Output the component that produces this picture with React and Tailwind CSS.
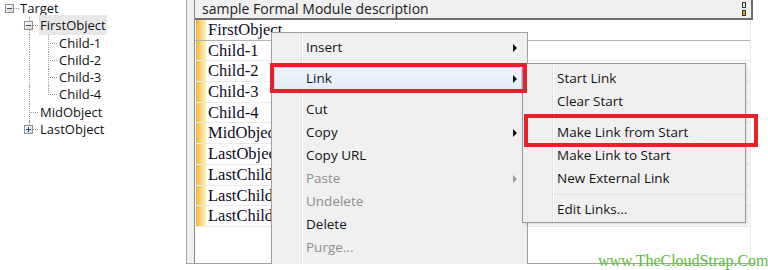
import React from "react";

const sans = { fontFamily: '"Open Sans", "Noto Sans", sans-serif' };

function TBox({ plus, left }) {
  return (
    <span
      className={`absolute top-[4px] w-[9px] h-[9px] border border-[#8f8f8f] bg-gradient-to-br from-white to-[#d8d8d8] ${left}`}
    >
      <span className="absolute left-[1px] top-[3px] w-[5px] h-px bg-[#2a4a78]" />
      {plus && <span className="absolute left-[3px] top-[1px] w-px h-[5px] bg-[#2a4a78]" />}
    </span>
  );
}

function HDot({ cls }) {
  return <span className={`absolute top-[8px] h-0 border-t border-dotted border-[#9a9a9a] ${cls}`} />;
}
function VDot({ cls }) {
  return <span className={`absolute w-0 border-l border-dotted border-[#9a9a9a] ${cls}`} />;
}

function TreeRow({ children, pad, text, hl }) {
  return (
    <div className={`relative h-[17.25px] leading-[17.25px] text-[13px] text-[#111] ${pad}`}>
      {children}
      <span className={`relative px-[1px] ${hl ? "bg-[#e8e8e8] py-[1px]" : ""}`}>{text}</span>
    </div>
  );
}

function Tree() {
  return (
    <div className="w-[186px] shrink-0" style={sans}>
      <TreeRow pad="pl-[19px]" text="Target">
        <TBox left="left-[5px]" />
        <HDot cls="left-[14px] w-[5px]" />
      </TreeRow>
      <TreeRow pad="pl-[39px]" text="FirstObject" hl>
        <VDot cls="left-[29px] top-0 h-[4px]" />
        <TBox left="left-[24px]" />
        <VDot cls="left-[29px] top-[13px] h-[5px]" />
        <HDot cls="left-[33px] w-[5px]" />
      </TreeRow>
      {["Child-1", "Child-2", "Child-3", "Child-4"].map((c, i) => (
        <TreeRow key={c} pad="pl-[58px]" text={c}>
          <VDot cls="left-[29px] top-0 h-full" />
          <VDot cls={`left-[48px] top-0 ${i === 3 ? "h-[9px]" : "h-full"}`} />
          <HDot cls="left-[48px] w-[9px]" />
        </TreeRow>
      ))}
      <TreeRow pad="pl-[39px]" text="MidObject">
        <VDot cls="left-[29px] top-0 h-full" />
        <HDot cls="left-[29px] w-[9px]" />
      </TreeRow>
      <TreeRow pad="pl-[39px]" text="LastObject">
        <VDot cls="left-[29px] top-0 h-[4px]" />
        <TBox left="left-[24px]" plus />
        <HDot cls="left-[33px] w-[5px]" />
      </TreeRow>
    </div>
  );
}

const rows = [
  "FirstObject",
  "Child-1",
  "Child-2",
  "Child-3",
  "Child-4",
  "MidObject",
  "LastObject",
  "LastChild",
  "LastChild",
  "LastChild",
];

function Main() {
  return (
    <div className="w-[568px] h-[264px] shrink-0 flex border-l border-b border-[#a3a3a3]">
      <div className="w-[7px] bg-[#f0f0f0]" />
      <div className="flex-1 flex flex-col border-l border-[#8c8c8c] mr-[1px]">
        <div
          className="flex items-center justify-between h-[20px] bg-[#f0f0f0] border-b-2 border-r-2 border-[#6e6e6e] pl-[7px] pr-[5px] text-[14px] text-[#1a1a1a]"
          style={sans}
        >
          <span className="leading-[18px]">sample Formal Module description</span>
          <span className="flex flex-col gap-[2px]">
            <span className="w-[4px] h-[6px] border border-[#333] bg-white" />
            <span className="w-[4px] h-[6px] border border-[#333] bg-[#f0a000]" />
          </span>
        </div>
        <div className="flex-1 bg-white border-r border-[#ececec] mr-[2px]">
          {rows.map((r, i) => (
            <div
              key={i}
              className={`flex h-[20.7px] border-b ${i === 0 ? "border-[#b4b4b4]" : "border-[#ececec]"}`}
            >
              <div className="w-[10px] ml-[1px] bg-gradient-to-r from-[#eeb035] via-[#fbd878] to-[#fff0b8]" />
              <div
                className="pl-[2px] text-[16.5px] leading-[20px] text-[#0b0b1e]"
                style={{ fontFamily: '"Liberation Serif", serif' }}
              >
                {r}
              </div>
            </div>
          ))}
        </div>
      </div>
    </div>
  );
}

function Arrow({ dim }) {
  return (
    <span
      className={`relative w-0 h-0 mr-[10px] border-y-[4px] border-y-transparent border-l-[4px] ${
        dim ? "border-l-[#9a9a9a]" : "border-l-[#111]"
      }`}
    />
  );
}

function Item({ text, arrow, dim, bold, hl }) {
  return (
    <div
      className={`relative h-[23px] flex items-center justify-between pl-[34px] ${
        dim ? "text-[#8e8e8e]" : "text-[#151515]"
      } ${bold ? "font-medium" : ""}`}
    >
      {hl && (
        <span className="absolute left-[2px] right-[5px] top-0 bottom-0 rounded-[3px] border border-[#b5d3f5] bg-gradient-to-b from-[#f0f5fb] to-[#e2ecf8]" />
      )}
      <span className="relative">{text}</span>
      {arrow && <Arrow dim={dim} />}
    </div>
  );
}

function Sep({ line }) {
  return (
    <div className="h-[8px] flex items-center pl-[31px]">
      {line && <div className="flex-1 h-px bg-[#e0e0e0]" />}
    </div>
  );
}

function MenuFrame({ cls, children }) {
  return (
    <div className={`absolute bg-[#f0f0f0] text-[13.5px] ${cls}`} style={sans}>
      <div className="absolute left-[29px] top-0 bottom-0 w-px bg-[#e2e2e2]" />
      <div className="absolute left-[30px] top-0 bottom-0 w-px bg-white" />
      <div className="relative flex flex-col pt-[3px]">{children}</div>
    </div>
  );
}

export default function App() {
  return (
    <div className="relative w-[768px] h-[270px] bg-white overflow-hidden">
      <div className="flex">
        <Tree />
        <Main />
      </div>
      <MenuFrame cls="left-[271px] top-[32px] w-[257px] h-[232px] border border-b-0 border-[#a0a0a0]">
        <Item text="Insert" arrow />
        <Sep />
        <Item text="Link" arrow hl />
        <Sep />
        <Item text="Cut" />
        <Item text="Copy" arrow />
        <Item text="Copy URL" />
        <Item text="Paste" arrow dim />
        <Item text="Undelete" dim />
        <Item text="Delete" bold />
        <Item text="Purge..." dim />
      </MenuFrame>
      <MenuFrame cls="left-[522px] top-[63px] w-[224px] h-[160px] border border-[#979797] shadow-[2px_2px_3px_rgba(0,0,0,0.12)]">
        <Item text="Start Link" />
        <Item text="Clear Start" />
        <Sep />
        <Item text="Make Link from Start" />
        <Item text="Make Link to Start" />
        <Item text="New External Link" />
        <Sep line />
        <Item text="Edit Links..." />
      </MenuFrame>
      <div className="absolute left-[270px] top-[63px] w-[257px] h-[30px] border-[4px] border-[#e8202a]" />
      <div className="absolute left-[524px] top-[114px] w-[234px] h-[33px] border-[4px] border-[#e8202a]" />
      <div
        className="absolute left-[598px] top-[252px] text-[16px] leading-[18px] text-[#5cbd3c]"
        style={{ fontFamily: '"Liberation Serif", serif' }}
      >
        www.TheCloudStrap.Com
      </div>
    </div>
  );
}
